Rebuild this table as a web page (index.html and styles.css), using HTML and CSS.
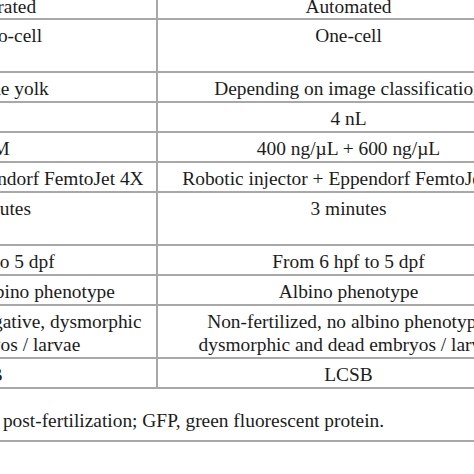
FILE: index.html
```html
<!DOCTYPE html>
<html lang="en">
<head>
<meta charset="utf-8">
<title>Comparison table</title>
<link rel="stylesheet" href="styles.css">
</head>
<body>
<div class="viewport">
  <div class="sheet">
    <div class="grid">
      <div class="cell label head">Parameter</div>
      <div class="cell mid head">Hand-operated</div>
      <div class="cell right head">Automated</div>

      <div class="cell label">Injection<br>stage</div>
      <div class="cell mid">One- to two-cell</div>
      <div class="cell right">One-cell</div>

      <div class="cell label">Site</div>
      <div class="cell mid">Centre of the yolk</div>
      <div class="cell right">Depending on image classification</div>

      <div class="cell label">Volume</div>
      <div class="cell mid">4 nL</div>
      <div class="cell right">4 nL</div>

      <div class="cell label">Dose</div>
      <div class="cell mid">100 µM</div>
      <div class="cell right">400 ng/µL + 600 ng/µL</div>

      <div class="cell label">Injector</div>
      <div class="cell mid">Manual injector + Eppendorf FemtoJet 4X</div>
      <div class="cell right">Robotic injector + Eppendorf FemtoJet 4X</div>

      <div class="cell label">Time per<br>100 eggs</div>
      <div class="cell mid">5–10 minutes</div>
      <div class="cell right">3 minutes</div>

      <div class="cell label">Window</div>
      <div class="cell mid">From 6 hpf to 5 dpf</div>
      <div class="cell right">From 6 hpf to 5 dpf</div>

      <div class="cell label">Selection</div>
      <div class="cell mid">GFP positive and albino phenotype</div>
      <div class="cell right">Albino phenotype</div>

      <div class="cell label">Discarded</div>
      <div class="cell mid">Non-fertilized, GFP negative, dysmorphic<br>and dead embryos / larvae</div>
      <div class="cell right">Non-fertilized, no albino phenotype,<br>dysmorphic and dead embryos / larvae</div>

      <div class="cell label">Facility</div>
      <div class="cell mid">LCSB</div>
      <div class="cell right">LCSB</div>
    </div>
    <p class="note">hpf, hours post-fertilization; dpf, days post-fertilization; GFP, green fluorescent protein.</p>
  </div>
</div>
</body>
</html>
```
FILE: styles.css
```css
html, body {
  margin: 0;
  padding: 0;
  background: #ffffff;
}

.viewport {
  width: 474px;
  height: 474px;
  overflow: hidden;
  font-family: "Liberation Serif", "Times New Roman", serif;
  font-size: 19.4px;
  line-height: 23px;
  color: #1c1c1c;
}

.sheet {
  width: 835px;
  margin-left: -296px;
  margin-top: -10px;
}

.grid {
  display: grid;
  grid-template-columns: 95px 357px 383px;
}

.cell {
  box-sizing: border-box;
  padding: 4px 8px 1px;
  border-bottom: 2px solid #a8a8a8;
  white-space: nowrap;
  overflow: hidden;
}

.cell.head {
  padding-top: 5px;
  padding-bottom: 0;
}

.mid,
.right {
  text-align: center;
  border-left: 2px solid #a8a8a8;
}

.label {
  text-align: left;
}

.note {
  margin: 0;
  padding: 20px 0 8px;
  border-bottom: 2px solid #a8a8a8;
  white-space: nowrap;
}
```
